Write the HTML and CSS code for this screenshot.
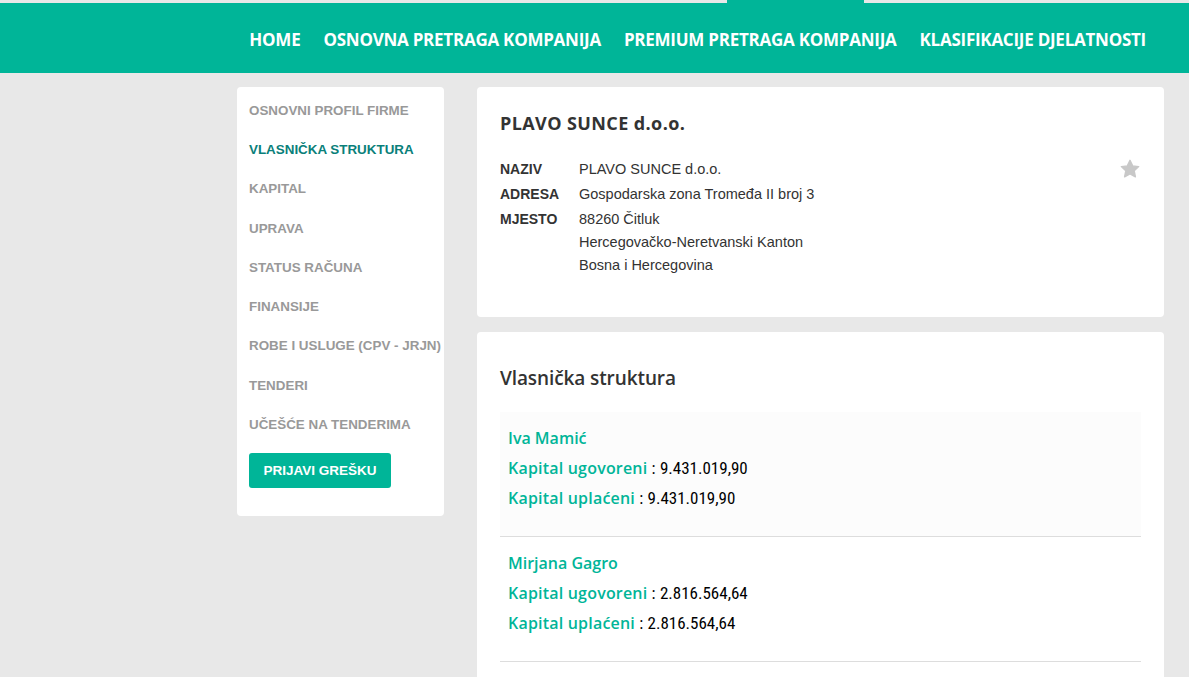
FILE: index.html
```html
<!DOCTYPE html>
<html lang="bs">
<head>
    <meta charset="UTF-8">
    <meta name="viewport" content="width=device-width, initial-scale=1.0">
    <title>PLAVO SUNCE d.o.o. - Vlasnička struktura</title>
    <link rel="stylesheet" href="styles.css">
</head>
<body>
    <div class="top-strip">
        <div class="top-tab"></div>
    </div>
    <header>
        <nav>
            <a href="#">HOME</a>
            <a href="#">OSNOVNA PRETRAGA KOMPANIJA</a>
            <a href="#">PREMIUM PRETRAGA KOMPANIJA</a>
            <a href="#">KLASIFIKACIJE DJELATNOSTI</a>
        </nav>
    </header>
    <div class="page">
        <aside class="sidebar">
            <a href="#">OSNOVNI PROFIL FIRME</a>
            <a href="#" class="active">VLASNIČKA STRUKTURA</a>
            <a href="#">KAPITAL</a>
            <a href="#">UPRAVA</a>
            <a href="#">STATUS RAČUNA</a>
            <a href="#">FINANSIJE</a>
            <a href="#">ROBE I USLUGE (CPV - JRJN)</a>
            <a href="#">TENDERI</a>
            <a href="#">UČEŠĆE NA TENDERIMA</a>
            <button class="report-btn">PRIJAVI GREŠKU</button>
        </aside>
        <main>
            <section class="card company">
                <h1>PLAVO SUNCE d.o.o.</h1>
                <span class="star">
                    <svg width="22" height="22" viewBox="0 0 24 24"><path d="M12 2.5l2.9 6.1 6.6.8-4.9 4.6 1.3 6.6L12 17.3l-5.9 3.3 1.3-6.6-4.9-4.6 6.6-.8z" fill="#c8c8c8" stroke="#c8c8c8" stroke-width="1.5" stroke-linejoin="round"/></svg>
                </span>
                <div class="fields">
                    <div class="label">NAZIV</div>
                    <div class="value">PLAVO SUNCE d.o.o.</div>
                    <div class="label">ADRESA</div>
                    <div class="value">Gospodarska zona Tromeđa II broj 3</div>
                    <div class="label">MJESTO</div>
                    <div class="value multi">88260 Čitluk<br>Hercegovačko-Neretvanski Kanton<br>Bosna i Hercegovina</div>
                </div>
            </section>
            <section class="card owners">
                <h2>Vlasnička struktura</h2>
                <div class="owner shaded">
                    <div class="owner-name">Iva Mamić</div>
                    <div class="owner-row"><span class="key">Kapital ugovoreni</span> : <span class="num">9.431.019,90</span></div>
                    <div class="owner-row"><span class="key">Kapital uplaćeni</span> : <span class="num">9.431.019,90</span></div>
                </div>
                <div class="owner">
                    <div class="owner-name">Mirjana Gagro</div>
                    <div class="owner-row"><span class="key">Kapital ugovoreni</span> : <span class="num">2.816.564,64</span></div>
                    <div class="owner-row"><span class="key">Kapital uplaćeni</span> : <span class="num">2.816.564,64</span></div>
                </div>
            </section>
        </main>
    </div>
</body>
</html>
```

FILE: styles.css
```css
body {
    margin: 0;
    padding: 0;
    background-color: #e8e8e8;
    font-family: "Liberation Sans", Arial, sans-serif;
    color: #333;
    height: 677px;
    overflow: hidden;
}
.top-strip {
    height: 3px;
    background-color: #e8e8e8;
    position: relative;
}
.top-tab {
    position: absolute;
    left: 727px;
    top: 0;
    width: 137px;
    height: 3px;
    background-color: #00b598;
}
header {
    background-color: #00b598;
    height: 70px;
    display: flex;
    justify-content: flex-end;
    align-items: center;
}
nav {
    display: flex;
    gap: 23px;
    padding-right: 43px;
    padding-top: 3px;
}
nav a {
    color: #fff;
    text-decoration: none;
    font-family: "Open Sans", sans-serif;
    font-weight: 700;
    font-size: 17px;
    letter-spacing: -0.25px;
}
.page {
    display: flex;
    gap: 33px;
    padding: 14px 25px 0 237px;
}
.sidebar {
    width: 207px;
    flex-shrink: 0;
    box-sizing: border-box;
    background: #fff;
    border-radius: 4px;
    padding: 15px 0 28px 12px;
    display: flex;
    flex-direction: column;
    align-self: flex-start;
    height: 429px;
}
.sidebar a {
    color: #999;
    text-decoration: none;
    font-weight: 700;
    font-size: 13.4px;
    line-height: 17px;
    height: 39.3px;
    white-space: nowrap;
}
.sidebar a.active {
    color: #0a7f7a;
}
.report-btn {
    align-self: flex-start;
    margin-top: -2px;
    background: #00b598;
    color: #fff;
    border: none;
    border-radius: 3px;
    width: 142px;
    height: 35px;
    font-family: "Liberation Sans", Arial, sans-serif;
    font-weight: 700;
    font-size: 13.5px;
    cursor: pointer;
}
main {
    flex: 1;
    display: flex;
    flex-direction: column;
    gap: 15px;
}
.card {
    background: #fff;
    border-radius: 4px;
    padding: 0 23px;
    position: relative;
}
.company {
    height: 230px;
    box-sizing: border-box;
    padding-top: 24px;
}
h1 {
    font-family: "Open Sans", sans-serif;
    font-size: 18px;
    font-weight: 700;
    margin: 0 0 22px 0;
    color: #333;
    letter-spacing: 0.4px;
}
.star {
    position: absolute;
    right: 23px;
    top: 71px;
}
.fields {
    display: grid;
    grid-template-columns: 79px auto;
    font-size: 14.5px;
    line-height: 25px;
}
.label {
    font-weight: 700;
    font-size: 14px;
    color: #333;
}
.value {
    color: #333;
}
.value.multi {
    line-height: 23px;
    padding-top: 1px;
}
.owners {
    padding-top: 33px;
    padding-bottom: 60px;
}
h2 {
    font-family: "Open Sans", sans-serif;
    font-size: 19px;
    font-weight: 600;
    margin: 0 0 21px 0;
    color: #333;
    letter-spacing: -0.1px;
}
.owner {
    padding: 13px 8px 23px 8px;
    border-bottom: 1px solid #ddd;
    font-family: "Open Sans", sans-serif;
}
.owner.shaded {
    background: #fcfcfc;
}
.owner-name {
    color: #00b598;
    font-weight: 600;
    font-size: 16px;
    line-height: 26px;
    margin-bottom: 2px;
}
.owner-row {
    font-size: 16px;
    line-height: 30px;
    color: #000;
}
.key {
    color: #00b598;
    font-weight: 600;
    letter-spacing: 0.2px;
}
.num {
    font-family: "Roboto", sans-serif;
    font-stretch: condensed;
    font-size: 17px;
    font-weight: 400;
}
```
